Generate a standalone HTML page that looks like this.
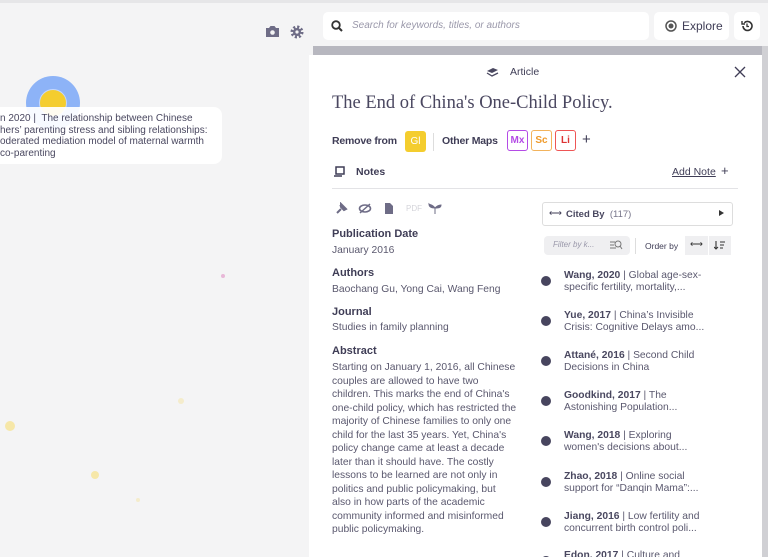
<!DOCTYPE html>
<html><head><meta charset="utf-8"><style>
*{box-sizing:border-box;margin:0;padding:0}
html,body{width:768px;height:557px;overflow:hidden}
body{background:#f4f4f5;font-family:"Liberation Sans",sans-serif;position:relative;color:#3f3d56}
.a{position:absolute}
.lab{font-size:11px;font-weight:bold;color:#3f3d56}
.val{font-size:10.3px;color:#5a586e}
.it{position:absolute;left:541px;width:180px;font-size:10.3px;line-height:12px;color:#5a586e}
.it b{color:#4a4860}
.it:before{content:"";position:absolute;left:0;top:6px;width:10px;height:10px;border-radius:50%;background:#47455e}
.it div{margin-left:23px}
</style></head><body>
<div class="a" style="left:0;top:0;width:768px;height:3px;background:#e6e6e8"></div>
<svg class="a" style="left:265px;top:25px" width="40" height="14" viewBox="0 0 40 14"><path d="M1 3h3l1.5-2h4L11 3h3v9H1z" fill="#6e6c86"/><circle cx="7.5" cy="7.5" r="2.3" fill="#f4f4f5"/><circle cx="32" cy="7" r="4.8" fill="none" stroke="#6e6c86" stroke-width="3.4" stroke-dasharray="2 1.77"/><circle cx="32" cy="7" r="4" fill="#6e6c86"/><circle cx="32" cy="7" r="1.6" fill="#f4f4f5"/></svg>
<div class="a" style="left:323px;top:12px;width:326px;height:28px;background:#fff;border-radius:5px"></div>
<svg class="a" style="left:331px;top:20px" width="12" height="12"><circle cx="5" cy="5" r="3.8" fill="none" stroke="#333" stroke-width="1.8"/><path d="M8 8l3 3" stroke="#333" stroke-width="2"/></svg>
<div class="a" style="left:352px;top:20px;font-size:10px;font-style:italic;color:#9a98aa">Search for keywords, titles, or authors</div>
<div class="a" style="left:654px;top:12px;width:75px;height:28px;background:#fff;border-radius:5px"></div>
<svg class="a" style="left:665px;top:20px" width="12" height="12"><circle cx="6" cy="6" r="5" fill="none" stroke="#555" stroke-width="1.5"/><circle cx="6" cy="6" r="2.5" fill="#555"/></svg>
<div class="a" style="left:682px;top:19px;font-size:12px;color:#3f3d56">Explore</div>
<div class="a" style="left:734px;top:12px;width:26px;height:28px;background:#fff;border-radius:5px"></div>
<svg class="a" style="left:741px;top:20px" width="12" height="12"><path d="M2 6a4.5 4.5 0 1 0 1.3-3.2" fill="none" stroke="#333" stroke-width="1.6"/><path d="M1 1v3h3" fill="none" stroke="#333" stroke-width="1.4"/><path d="M6 3.5V6.5h2" fill="none" stroke="#333" stroke-width="1.3"/></svg>
<div class="a" style="left:26px;top:76px;width:54px;height:54px;border-radius:50%;background:#8db3f7"></div>
<div class="a" style="left:39px;top:89px;width:28px;height:28px;border-radius:50%;background:#f4cd2e;border:1px solid #c6d8fb"></div>
<div class="a" style="left:-10px;top:107px;width:232px;height:57px;background:rgba(255,255,255,.93);border-radius:8px"></div>
<div class="a" style="left:0;top:113px;font-size:10px;line-height:11.6px;color:#4a4860;white-space:nowrap">n 2020 |&nbsp; The relationship between Chinese<br>hers’ parenting stress and sibling relationships:<br>oderated mediation model of maternal warmth<br>co-parenting</div>
<div class="a" style="left:5px;top:421px;width:10px;height:10px;border-radius:50%;background:#f6e7a8"></div>
<div class="a" style="left:91px;top:471px;width:8px;height:8px;border-radius:50%;background:#f6e7a8"></div>
<div class="a" style="left:178px;top:398px;width:6px;height:6px;border-radius:50%;background:#f4eccc"></div>
<div class="a" style="left:221px;top:274px;width:4px;height:4px;border-radius:50%;background:#e8b8d8"></div>
<div class="a" style="left:136px;top:498px;width:4px;height:4px;border-radius:50%;background:#f4eccc"></div>
<div class="a" style="left:313px;top:46px;width:449px;height:10px;background:#b7b7bf"></div>
<div class="a" style="left:762px;top:46px;width:6px;height:511px;background:#d0d0d4"></div>
<div class="a" style="left:309px;top:55px;width:453px;height:502px;background:#fff;overflow:hidden">
<div class="it" style="top:495px;left:232px"><div><b>Edon, 2017</b> | Culture and</div></div>
</div>
<svg class="a" style="left:486px;top:67px" width="13" height="10"><path d="M1 4l6-3 5 2-6 3z" fill="#4a4860"/><path d="M1 6l5 3 6-3" fill="none" stroke="#4a4860" stroke-width="1.3"/></svg>
<div class="a" style="left:510px;top:66px;font-size:10.5px;color:#3f3d56">Article</div>
<svg class="a" style="left:734px;top:66px" width="12" height="12"><path d="M1 1l10 10M11 1L1 11" stroke="#3f3d56" stroke-width="1.3"/></svg>
<div class="a" style="left:332px;top:93px;font-family:'Liberation Serif',serif;font-size:18.5px;color:#4a4760">The End of China's One-Child Policy.</div>
<div class="a" style="left:332px;top:135px;font-size:10.5px;font-weight:bold;letter-spacing:-0.2px;color:#3f3d56">Remove from</div>
<div class="a" style="left:405px;top:131px;width:21px;height:21px;border-radius:3px;background:#f4cd2e;color:#fff;font-size:10px;text-align:center;line-height:21px">Gl</div>
<div class="a" style="left:433px;top:133px;width:1px;height:18px;background:#ddd"></div>
<div class="a" style="left:442px;top:135px;font-size:10.5px;font-weight:bold;letter-spacing:-0.2px;color:#3f3d56">Other Maps</div>
<div class="a" style="left:507px;top:130px;width:21px;height:21px;border-radius:3px;border:1px solid #b44be6;color:#b44be6;font-size:10px;font-weight:bold;text-align:center;line-height:19px">Mx</div>
<div class="a" style="left:531px;top:130px;width:21px;height:21px;border-radius:3px;border:1px solid #f2b35c;color:#ef9a2a;font-size:10px;font-weight:bold;text-align:center;line-height:19px">Sc</div>
<div class="a" style="left:555px;top:130px;width:21px;height:21px;border-radius:3px;border:1px solid #e55;color:#d33;font-size:10px;font-weight:bold;text-align:center;line-height:19px">Li</div>
<div class="a" style="left:582px;top:131px;font-size:15px;color:#3f3d56">+</div>
<svg class="a" style="left:333px;top:166px" width="12" height="11"><path d="M3 1h8v7H3zM1 10h8" fill="none" stroke="#3f3d56" stroke-width="1.5"/></svg>
<div class="a" style="left:356px;top:166px;font-size:10.5px;font-weight:bold;color:#3f3d56">Notes</div>
<div class="a" style="left:672px;top:166px;font-size:10.5px;color:#3f3d56;text-decoration:underline">Add Note</div>
<div class="a" style="left:721px;top:163px;font-size:13px;color:#3f3d56">+</div>
<div class="a" style="left:332px;top:188px;width:406px;height:1px;background:#e3e3e6"></div>
<svg class="a" style="left:335px;top:202px" width="115" height="13"><path d="M2 11l4-4M5 3l5 5M6 2l5 5-2 1-3-3z" stroke="#6e6c86" stroke-width="2" fill="#6e6c86"/><ellipse cx="30" cy="6.5" rx="5.5" ry="3.5" fill="none" stroke="#6e6c86" stroke-width="1.6"/><path d="M25 11L35 2" stroke="#6e6c86" stroke-width="1.5"/><path d="M50 1h5l3 3v8h-8z" fill="#6e6c86"/><path d="M100 12V6M100 6c-3-4-5-3-6-4 0 3 3 4 6 4zM100 6c3-3 5-3 6-3 0 3-3 3-6 3" fill="#6e6c86" stroke="#6e6c86"/></svg>
<div class="a" style="left:406px;top:204px;font-size:8px;color:#d4d4da">PDF</div>
<div class="a lab" style="left:332px;top:228px">Publication Date</div>
<div class="a val" style="left:332px;top:245px">January 2016</div>
<div class="a lab" style="left:332px;top:267px">Authors</div>
<div class="a val" style="left:332px;top:284px">Baochang Gu, Yong Cai, Wang Feng</div>
<div class="a lab" style="left:332px;top:306px">Journal</div>
<div class="a val" style="left:332px;top:322px">Studies in family planning</div>
<div class="a lab" style="left:332px;top:345px">Abstract</div>
<div class="a val" style="left:332px;top:361px;width:190px;line-height:13.5px">Starting on January 1, 2016, all Chinese<br>couples are allowed to have two<br>children. This marks the end of China's<br>one-child policy, which has restricted the<br>majority of Chinese families to only one<br>child for the last 35 years. Yet, China's<br>policy change came at least a decade<br>later than it should have. The costly<br>lessons to be learned are not only in<br>politics and public policymaking, but<br>also in how parts of the academic<br>community informed and misinformed<br>public policymaking.</div>
<div class="a" style="left:542px;top:202px;width:191px;height:24px;border:1px solid #ddd;border-radius:3px"></div>
<div class="a" style="left:549px;top:208px;font-size:9px;color:#3f3d56">⟷</div>
<div class="a" style="left:566px;top:209px;font-size:9.5px;font-weight:bold;color:#4a4860">Cited By <span style="font-weight:normal;color:#77758a">&nbsp;(117)</span></div>
<div class="a" style="left:719px;top:210px;width:0;height:0;border-left:5px solid #333;border-top:3.5px solid transparent;border-bottom:3.5px solid transparent"></div>
<div class="a" style="left:544px;top:236px;width:86px;height:19px;background:#efeff1;border-radius:4px"></div>
<div class="a" style="left:553px;top:240px;font-size:8px;font-style:italic;color:#9a98aa">Filter by k...</div>
<svg class="a" style="left:609px;top:239px" width="14" height="12"><path d="M1 3h5M1 6h4M1 9h6" stroke="#777" stroke-width="1"/><circle cx="9" cy="5" r="3" fill="none" stroke="#777"/><path d="M11 7l2 3" stroke="#777"/></svg>
<div class="a" style="left:635px;top:238px;width:1px;height:16px;background:#ddd"></div>
<div class="a" style="left:645px;top:241px;font-size:8.5px;color:#3f3d56">Order by</div>
<div class="a" style="left:685px;top:236px;width:23px;height:19px;background:#efeff1"></div>
<div class="a" style="left:690px;top:239px;font-size:9px;color:#333">⟷</div>
<div class="a" style="left:709px;top:236px;width:22px;height:19px;background:#efeff1"></div>
<svg class="a" style="left:714px;top:240px" width="12" height="11"><path d="M2 1v8M0 7l2 2 2-2M6 2h5M6 5h4M6 8h3" stroke="#333" stroke-width="1.1" fill="none"/></svg>
<div class="it" style="top:270px"><div><b>Wang, 2020</b> | Global age-sex-<br>specific fertility, mortality,...</div></div>
<div class="it" style="top:310px"><div><b>Yue, 2017</b> | China’s Invisible<br>Crisis: Cognitive Delays amo...</div></div>
<div class="it" style="top:350px"><div><b>Attané, 2016</b> | Second Child<br>Decisions in China</div></div>
<div class="it" style="top:390px"><div><b>Goodkind, 2017</b> | The<br>Astonishing Population...</div></div>
<div class="it" style="top:430px"><div><b>Wang, 2018</b> | Exploring<br>women's decisions about...</div></div>
<div class="it" style="top:471px"><div><b>Zhao, 2018</b> | Online social<br>support for “Danqin Mama”:...</div></div>
<div class="it" style="top:511px"><div><b>Jiang, 2016</b> | Low fertility and<br>concurrent birth control poli...</div></div>
</body></html>
